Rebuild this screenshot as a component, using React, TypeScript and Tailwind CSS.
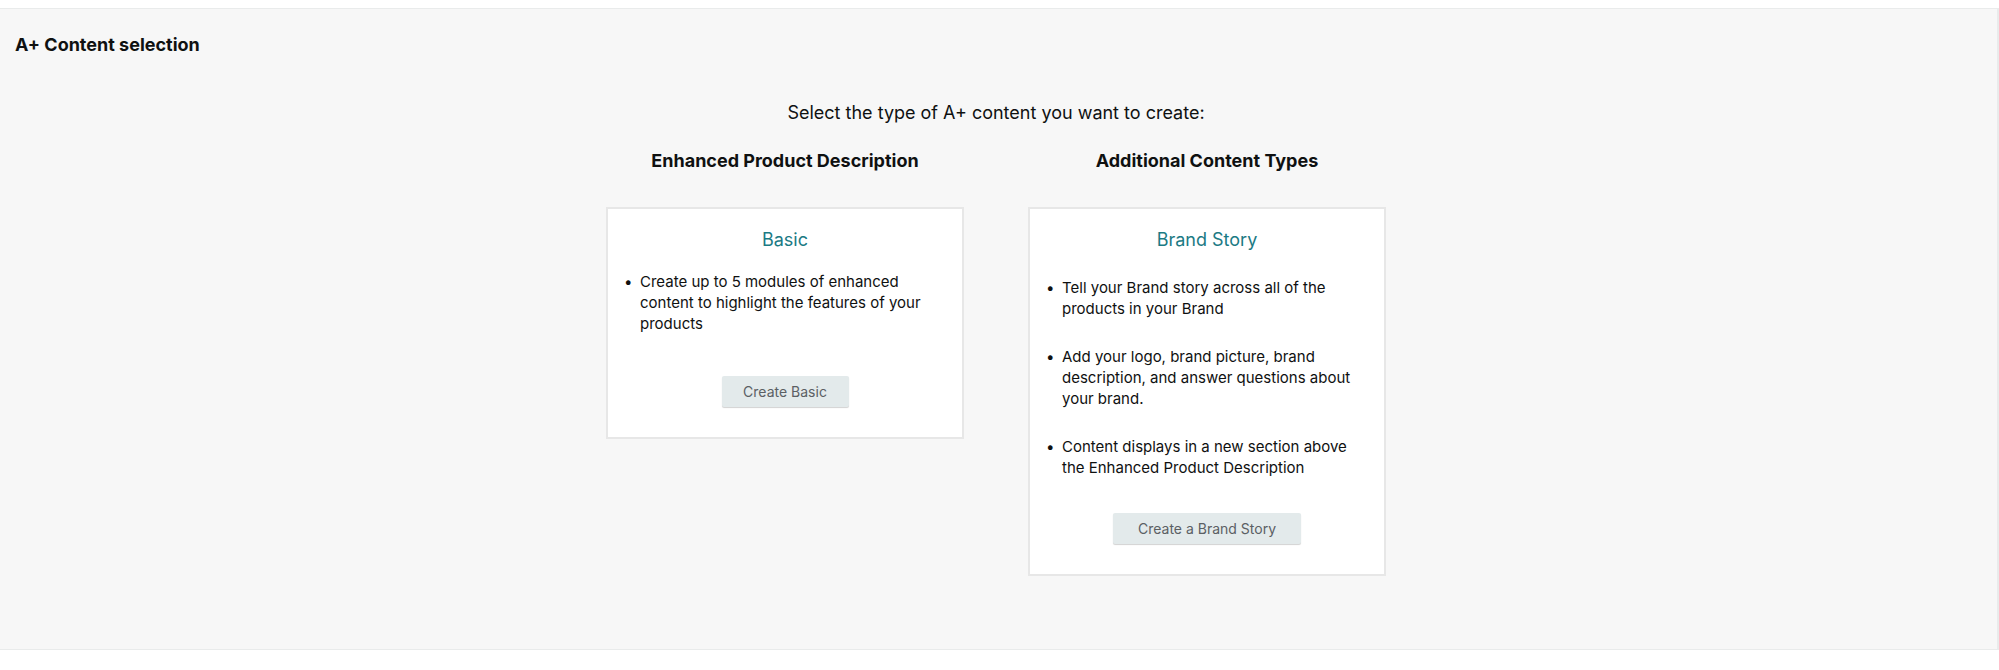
import React from "react";

const font = { fontFamily: "Inter, 'Noto Sans', sans-serif" };

type CardProps = {
  title: string;
  items: React.ReactNode[];
  button: string;
  buttonWidth: string;
  listTop: string;
  itemGap: string;
  buttonTop: string;
};

// One content-type card: teal title, bullet list, grey action button
function TypeCard({ title, items, button, buttonWidth, listTop, itemGap, buttonTop }: CardProps) {
  return (
    <div className="w-[358px] border-2 border-[#e7e7e7] bg-white px-[16px] pt-[19px] pb-[30px]">
      <h3 className="text-center text-[18px] leading-[24px] text-[#1b7a84]">{title}</h3>
      <ul className={`flex flex-col text-[15px] leading-[21px] text-[#0f1111] ${listTop} ${itemGap}`}>
        {items.map((item, i) => (
          <li key={i} className="flex whitespace-nowrap">
            <span className="w-[16px] shrink-0" aria-hidden="true">
              •
            </span>
            <span>{item}</span>
          </li>
        ))}
      </ul>
      <div className={`flex justify-center ${buttonTop}`}>
        <button
          className={`${buttonWidth} h-[31px] rounded-[2px] bg-[#e3eaeb] text-[14px] text-[#5b6064] shadow-[0_1px_1px_rgba(0,0,0,0.18)]`}
        >
          {button}
        </button>
      </div>
    </div>
  );
}

export default function App() {
  return (
    <div className="h-[670px] w-full bg-white pt-[8px]" style={font}>
      <div className="h-[642px] border-t border-b border-r-2 border-[#e9ebeb] bg-[#f7f7f7]">
        {/* ── Page title ─────────────────────────────────────────────── */}
        <h1 className="pl-[15px] pt-[23px] text-[18px] font-bold leading-[26px] text-[#0f1111]">
          A+ Content selection
        </h1>

        {/* ── Selection area ─────────────────────────────────────────── */}
        <div className="mt-[43px] flex flex-col items-center pr-[5px]">
          <p className="text-[18px] leading-[24px] text-[#0f1111]">
            Select the type of A+ content you want to create:
          </p>

          <div className="mt-[24px] flex items-start gap-[64px]">
            <div className="flex flex-col items-center">
              <h2 className="text-[18px] font-bold leading-[24px] text-[#0f1111]">
                Enhanced Product Description
              </h2>
              <div className="mt-[34px]">
                <TypeCard
                  title="Basic"
                  items={[
                    <>
                      Create up to 5 modules of enhanced
                      <br />
                      content to highlight the features of your
                      <br />
                      products
                    </>,
                  ]}
                  button="Create Basic"
                  buttonWidth="w-[127px]"
                  listTop="mt-[19px]"
                  itemGap="gap-0"
                  buttonTop="mt-[42px]"
                />
              </div>
            </div>

            <div className="flex flex-col items-center">
              <h2 className="text-[18px] font-bold leading-[24px] text-[#0f1111]">
                Additional Content Types
              </h2>
              <div className="mt-[34px]">
                <TypeCard
                  title="Brand Story"
                  items={[
                    <>
                      Tell your Brand story across all of the
                      <br />
                      products in your Brand
                    </>,
                    <>
                      Add your logo, brand picture, brand
                      <br />
                      description, and answer questions about
                      <br />
                      your brand.
                    </>,
                    <>
                      Content displays in a new section above
                      <br />
                      the Enhanced Product Description
                    </>,
                  ]}
                  button="Create a Brand Story"
                  buttonWidth="w-[188px]"
                  listTop="mt-[25px]"
                  itemGap="gap-[27px]"
                  buttonTop="mt-[35px]"
                />
              </div>
            </div>
          </div>
        </div>
      </div>
    </div>
  );
}
